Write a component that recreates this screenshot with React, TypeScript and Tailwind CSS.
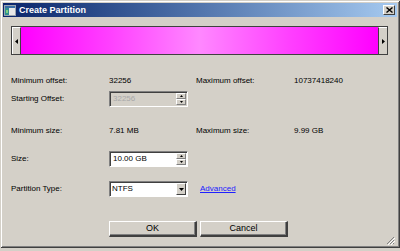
import React from 'react'

const font = "font-['Liberation_Sans',Arial,sans-serif]"

function Spinner() {
  return (
    <div className="flex flex-col w-[10px] h-full">
      {[0, 1].map((i) => (
        <div
          key={i}
          className="flex-1 flex items-center justify-center bg-[#d4d0c8] border-t border-l border-white border-r border-b border-r-[#808080] border-b-[#808080]"
        >
          <svg width="3" height="2" viewBox="0 0 3 2">
            {i === 0 ? <path d="M0 2 L1.5 0 L3 2 Z" fill="#000" /> : <path d="M0 0 L1.5 2 L3 0 Z" fill="#000" />}
          </svg>
        </div>
      ))}
    </div>
  )
}

function SpinBox({ value, disabled }: { value: string; disabled?: boolean }) {
  return (
    <div
      className={`w-[79px] h-[16px] flex items-stretch border-t border-l border-[#808080] border-b border-r border-b-white border-r-white shadow-[inset_1px_1px_0_#404040] pl-[2px] pt-[1px] pr-[1px] pb-[1px] ${disabled ? 'bg-[#d4d0c8]' : 'bg-white'}`}
    >
      <div className={`flex-1 flex items-center pl-[1px] ${disabled ? 'text-[#a8a8a8]' : 'text-black'}`}>{value}</div>
      <Spinner />
    </div>
  )
}

function Row({ label, value, label2, value2 }: { label: string; value: string; label2: string; value2: string }) {
  return (
    <div className="flex items-center h-[14px]">
      <div className="w-[98px]">{label}</div>
      <div className="w-[87px]">{value}</div>
      <div className="w-[98px]">{label2}</div>
      <div>{value2}</div>
    </div>
  )
}

function Button({ children }: { children: React.ReactNode }) {
  return (
    <div className="w-[88px] h-[16px] flex items-center justify-center bg-[#d4d0c8] border-t border-l border-white border-r-2 border-b-2 border-r-[#404040] border-b-[#404040] shadow-[inset_-1px_-1px_0_#808080] text-[9px]">
      {children}
    </div>
  )
}

export default function App() {
  return (
    <div className={`w-[400px] h-[251px] bg-[#d4d0c8] ${font} text-[8px] text-black overflow-hidden`}>
      <div className="w-[400px] h-[248px] flex flex-col p-[3px] shadow-[inset_1px_1px_0_#d4d0c8,inset_-1px_-1px_0_#404040,inset_2px_2px_0_#ffffff,inset_-2px_-2px_0_#808080]">
        {/* title bar */}
        <div className="shrink-0 h-[14px] flex items-center bg-gradient-to-r from-[#0a246a] to-[#a6caf0] pl-[1px] pr-[2px]">
          <svg width="12" height="11" viewBox="0 0 12 11" className="mr-[3px]">
            <rect x="0.5" y="0.5" width="11" height="10" fill="#e8e8e8" stroke="#9aa4b0" />
            <rect x="1" y="1" width="10" height="2" fill="#3a6ea5" />
            <rect x="1" y="3" width="4" height="7" fill="#2f8f8f" />
            <rect x="2" y="5" width="2" height="3" fill="#7fd07f" />
          </svg>
          <div className="flex-1 text-white font-bold text-[9px] leading-none">Create Partition</div>
          <div className="w-[12px] h-[10px] flex items-center justify-center bg-[#d4d0c8] border-t border-l border-white border-r border-b border-r-[#404040] border-b-[#404040]">
            <svg width="7" height="6" viewBox="0 0 7 6">
              <path d="M0.5 0.5 L6.5 5.5 M6.5 0.5 L0.5 5.5" stroke="#000" strokeWidth="1.4" />
            </svg>
          </div>
        </div>

        {/* partition slider */}
        <div className="shrink-0 ml-[8px] mt-[9px] w-[377px] h-[29px] flex border border-[#404040] bg-[#d4d0c8]">
          <div className="w-[9px] flex items-center justify-center border-r border-[#404040] border-t border-l border-t-white border-l-white">
            <svg width="3" height="5" viewBox="0 0 3 5">
              <path d="M3 0 L0 2.5 L3 5 Z" fill="#000" />
            </svg>
          </div>
          <div className="flex-1 bg-[linear-gradient(to_right,#ff00ff_0%,#ff40ff_25%,#ff88ff_50%,#ff40ff_75%,#ff00ff_100%)]" />
          <div className="w-[9px] flex items-center justify-center border-l border-[#404040] border-t border-t-white">
            <svg width="3" height="5" viewBox="0 0 3 5">
              <path d="M0 0 L3 2.5 L0 5 Z" fill="#000" />
            </svg>
          </div>
        </div>

        {/* fields */}
        <div className="shrink-0 pl-[8px] flex flex-col">
          <div className="mt-[19px]">
            <Row label="Minimum offset:" value="32256" label2="Maximum offset:" value2="10737418240" />
          </div>
          <div className="mt-[3px] flex items-center h-[16px]">
            <div className="w-[98px]">Starting Offset:</div>
            <SpinBox value="32256" disabled />
          </div>
          <div className="mt-[17px]">
            <Row label="Minimum size:" value="7.81 MB" label2="Maximum size:" value2="9.99 GB" />
          </div>
          <div className="mt-[13px] flex items-center h-[16px]">
            <div className="w-[98px]">Size:</div>
            <SpinBox value="10.00 GB" />
          </div>
          <div className="mt-[14px] flex items-center h-[16px]">
            <div className="w-[98px]">Partition Type:</div>
            <div className="w-[79px] h-[16px] flex items-stretch bg-white border-t border-l border-[#808080] border-b border-r border-b-white border-r-white shadow-[inset_1px_1px_0_#404040] pl-[2px] pt-[1px] pr-[1px] pb-[1px]">
              <div className="flex-1 flex items-center">NTFS</div>
              <div className="w-[10px] flex items-center justify-center bg-[#d4d0c8] border-t border-l border-white border-r border-b border-r-[#404040] border-b-[#404040]">
                <svg width="5" height="3" viewBox="0 0 5 3">
                  <path d="M0 0 L2.5 3 L5 0 Z" fill="#000" />
                </svg>
              </div>
            </div>
            <div className="ml-[12px] text-[#2020ff] underline">Advanced</div>
          </div>
          <div className="mt-[24px] flex items-center gap-[3px] pl-[98px]">
            <Button>OK</Button>
            <Button>Cancel</Button>
          </div>
        </div>

        {/* size grip */}
        <div className="flex-1 min-h-0 flex items-end justify-end pr-[2px]">
          <svg width="8" height="8" viewBox="0 0 8 8">
            <path d="M7 0 L0 7 M7 3 L3 7 M7 6 L6 7" stroke="#808080" strokeWidth="1" />
            <path d="M8 1 L1 8 M8 4 L4 8" stroke="#ffffff" strokeWidth="1" />
          </svg>
        </div>
      </div>
    </div>
  )
}
